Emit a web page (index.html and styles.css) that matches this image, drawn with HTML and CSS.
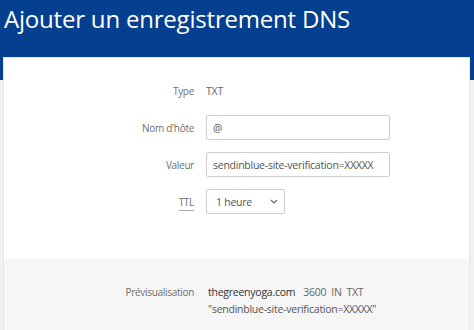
FILE: index.html
```html
<!DOCTYPE html>
<html lang="fr">
<head>
<meta charset="utf-8">
<title>Ajouter un enregistrement DNS</title>
<link rel="stylesheet" href="styles.css">
</head>
<body>
<header class="top">
  <h1 class="title">Ajouter un enregistrement DNS</h1>
</header>
<main class="card">
  <form class="form">
    <div class="row row-static">
      <span class="label">Type</span>
      <span class="static">TXT</span>
    </div>
    <div class="row">
      <label class="label">Nom d'hôte</label>
      <div class="input wide">@</div>
    </div>
    <div class="row">
      <label class="label">Valeur</label>
      <div class="input wide">sendinblue-site-verification=XXXXX</div>
    </div>
    <div class="row">
      <label class="label"><abbr class="abbr">TTL</abbr></label>
      <div class="input select">
        <span>1 heure</span>
        <svg class="chev" width="8" height="5" viewBox="0 0 8 5"><path d="M1 1l3 3 3-3" fill="none" stroke="#666" stroke-width="1.1"/></svg>
      </div>
    </div>
  </form>
  <section class="preview">
    <span class="label">Prévisualisation</span>
    <div class="pv">
      <div><span class="host">thegreenyoga.com</span><span class="rec">3600&nbsp;&nbsp;IN&nbsp;&nbsp;TXT</span></div>
      <div>"sendinblue-site-verification=XXXXX"</div>
    </div>
  </section>
</main>
</body>
</html>
```
FILE: styles.css
```css
* { box-sizing: border-box; }
html, body { margin: 0; padding: 0; }
body {
  background: #f1f1f1;
  font-family: "Open Sans", "Noto Sans", sans-serif;
  width: 474px;
  height: 330px;
  overflow: hidden;
}
.top {
  background: #053f90;
  height: 80px;
  padding: 2px 0 0 4px;
}
.title {
  margin: 0;
  color: #fff;
  font-family: "Open Sans", sans-serif;
  font-weight: 400;
  font-size: 24px;
  line-height: 34px;
  letter-spacing: -0.2px;
}
.card {
  margin: -23px 4px 0 3px;
  background: #fff;
  border: 1px solid #e6e6e6;
  border-bottom: none;
}
.form {
  display: flex;
  flex-direction: column;
  gap: 12px;
  padding: 22px 0 45px;
}
.row {
  display: grid;
  grid-template-columns: 190px auto;
  column-gap: 12px;
  align-items: center;
  height: 25px;
}
.row-static { height: 22px; margin-bottom: 1px; }
.label {
  text-align: right;
  color: #6f6f6f;
  font-size: 10px;
  letter-spacing: -0.3px;
}
.static {
  color: #666;
  font-size: 10.5px;
  letter-spacing: -0.2px;
}
.abbr {
  text-decoration: none;
  border-bottom: 1px solid #aaa;
  padding-bottom: 1px;
}
.input {
  height: 25px;
  border: 1px solid #cdcdcd;
  border-radius: 2px;
  padding: 0 6px;
  display: flex;
  align-items: center;
  color: #555;
  font-size: 10.5px;
  letter-spacing: -0.25px;
  white-space: nowrap;
}
.wide { width: 184px; }
.select {
  width: 79px;
  justify-content: space-between;
  padding: 0 6px 0 9px;
}
.chev { display: block; }
.preview {
  background: #f6f6f6;
  display: grid;
  grid-template-columns: 190px auto;
  column-gap: 14px;
  padding: 25px 0 30px;
  line-height: 17px;
  height: 80px;
}
.preview .label { line-height: 17px; }
.pv {
  color: #555;
  font-size: 10.5px;
  letter-spacing: -0.25px;
}
.host { color: #333; margin-right: 8px; }
.rec { color: #666; }
```
